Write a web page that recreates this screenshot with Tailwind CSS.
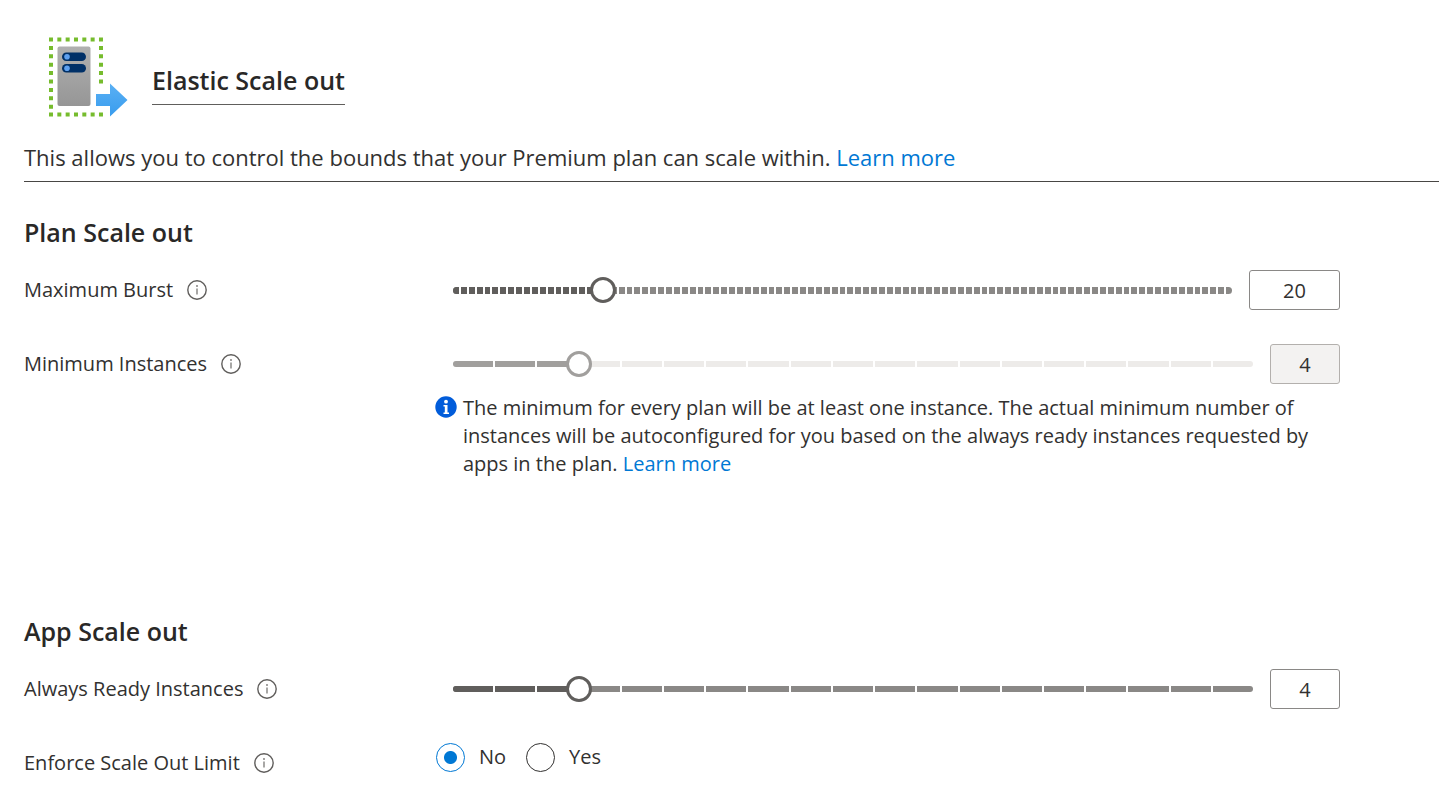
<!DOCTYPE html>
<html lang="en">
<head>
<meta charset="utf-8">
<title>Elastic Scale out</title>
<script src="https://cdn.jsdelivr.net/npm/@tailwindcss/browser@4"></script>
</head>
<body class="bg-white pl-6 text-[20px] leading-7 text-[#323130] font-['Open_Sans','Noto_Sans',sans-serif]">
<svg class="hidden">
  <symbol id="info" viewBox="0 0 20 20"><circle cx="10" cy="10" r="9.2" fill="none" stroke="#605e5c" stroke-width="1.4"/><path d="M10 8.500v6" stroke="#797775" stroke-width="1.300"/><circle cx="10" cy="6" r="0.900" fill="#797775"/></symbol>
</svg>

<header class="flex items-start gap-6 pt-9 pl-6">
  <svg class="h-[82px] w-20 shrink-0" viewBox="0 0 80 82" aria-hidden="true">
    <defs>
      <linearGradient id="box" x1="0" y1="0" x2="0" y2="1"><stop offset="0" stop-color="#b0b0b0"/><stop offset="1" stop-color="#969696"/></linearGradient>
      <linearGradient id="arrow" x1="0" y1="0" x2="0" y2="1"><stop offset="0" stop-color="#5ab0f4"/><stop offset="1" stop-color="#389cee"/></linearGradient>
    </defs>
    <g fill="none" stroke="#76bc2d" stroke-width="4">
      <path d="M1 3.5h56" stroke-dasharray="4 4.33"/>
      <path d="M1 78.5h56" stroke-dasharray="4 4.33"/>
      <path d="M3 9.9v63" stroke-dasharray="4 4.4"/>
      <path d="M53 9.9v39" stroke-dasharray="4 4.4"/>
    </g>
    <rect x="9.5" y="10.5" width="33" height="59.500" rx="2" fill="url(#box)"/>
    <rect x="14" y="16.500" width="24" height="8.500" rx="4.250" fill="#003067"/>
    <rect x="14" y="28" width="24" height="8.500" rx="4.250" fill="#003067"/>
    <circle cx="19" cy="20.700" r="2.800" fill="#5ea0ef"/>
    <circle cx="19" cy="32.300" r="2.800" fill="#5ea0ef"/>
    <path d="M48 58h14V47.500L79.500 64 62 80.500V70H48z" fill="url(#arrow)"/>
  </svg>
  <h1 class="mt-[26px] border-b border-[#605e5c] pb-1.5 text-[25px] leading-9 font-semibold text-[#292827]">Elastic Scale out</h1>
</header>

<p class="mt-[23px] border-b border-[#484644] pb-2 text-[22px] leading-8">This allows you to control the bounds that your Premium plan can scale within. <a href="#" class="text-[#0078d4]">Learn more</a></p>

<main class="pr-[99px]">
  <section>
    <h2 class="pt-8 text-[25px] leading-9 font-semibold text-[#292827]">Plan Scale out</h2>
    <div class="mt-5 flex h-10 items-center">
      <div class="flex w-[429px] shrink-0 items-center gap-3.5"><label for="burst">Maximum Burst</label><svg class="size-5"><use href="#info"/></svg></div>
      <div class="mr-[17px] grid flex-1 items-center">
        <div class="col-start-1 row-start-1 h-[7px] overflow-hidden rounded-full bg-[#8a8886]"><div class="h-full bg-[#605e5c]" style="width:19.19%"></div></div>
        <div class="col-start-1 row-start-1 -mr-0.5 h-[7px] bg-[repeating-linear-gradient(90deg,transparent_0_calc(100%/99_-_2px),white_calc(100%/99_-_2px)_calc(100%/99))]"></div>
        <input id="burst" type="range" min="1" max="100" value="20" class="relative col-start-1 row-start-1 -ml-[13px] h-[26px] w-[calc(100%+26px)] appearance-none bg-transparent [&::-webkit-slider-thumb]:size-[26px] [&::-webkit-slider-thumb]:appearance-none [&::-webkit-slider-thumb]:rounded-full [&::-webkit-slider-thumb]:border-3 [&::-webkit-slider-thumb]:border-[#605e5c] [&::-webkit-slider-thumb]:bg-white">
      </div>
      <input type="text" value="20" aria-label="Maximum Burst value" class="h-10 w-[91px] rounded-[3px] border border-[#8a8886] text-center">
    </div>
    <div class="mt-[34px] flex h-10 items-center">
      <div class="flex w-[429px] shrink-0 items-center gap-3.5"><label for="minimum">Minimum Instances</label><svg class="size-5"><use href="#info"/></svg></div>
      <div class="mr-[17px] grid flex-1 items-center">
        <div class="col-start-1 row-start-1 h-1.5 overflow-hidden rounded-full bg-[#edebe9]"><div class="h-full bg-[#a19f9d]" style="width:15.79%"></div></div>
        <div class="col-start-1 row-start-1 -mr-0.5 h-1.5 bg-[repeating-linear-gradient(90deg,transparent_0_calc(100%/19_-_2px),white_calc(100%/19_-_2px)_calc(100%/19))]"></div>
        <input id="minimum" type="range" min="1" max="20" value="4" disabled class="relative col-start-1 row-start-1 -ml-[13px] h-[26px] w-[calc(100%+26px)] appearance-none bg-transparent [&::-webkit-slider-thumb]:size-[26px] [&::-webkit-slider-thumb]:appearance-none [&::-webkit-slider-thumb]:rounded-full [&::-webkit-slider-thumb]:border-3 [&::-webkit-slider-thumb]:border-[#a19f9d] [&::-webkit-slider-thumb]:bg-white">
      </div>
      <input type="text" value="4" disabled aria-label="Minimum Instances value" class="h-10 w-[70px] rounded-[3px] border border-[#b3b0ad] bg-[#f3f2f1] text-center">
    </div>
    <div class="mt-2.5 ml-[411px] flex gap-1.5">
      <svg class="mt-0.5 size-[22px] shrink-0" viewBox="0 0 22 22" aria-hidden="true"><circle cx="11" cy="11" r="10.700" fill="#015cda"/><circle cx="11" cy="5.700" r="1.900" fill="#fff"/><path d="M8.500 9h4v7.500h1.500V18H8.500v-1.500h1.300v-6H8.500z" fill="#fff"/></svg>
      <p class="max-w-[870px]">The minimum for every plan will be at least one instance. The actual minimum number of instances will be autoconfigured for you based on the always ready instances requested by apps in the plan. <a href="#" class="text-[#0078d4]">Learn more</a></p>
    </div>
  </section>

  <section class="mt-[103px]">
    <h2 class="pt-8 text-[25px] leading-9 font-semibold text-[#292827]">App Scale out</h2>
    <div class="mt-5 flex h-10 items-center">
      <div class="flex w-[429px] shrink-0 items-center gap-3.5"><label for="ready">Always Ready Instances</label><svg class="size-5"><use href="#info"/></svg></div>
      <div class="mr-[17px] grid flex-1 items-center">
        <div class="col-start-1 row-start-1 h-1.5 overflow-hidden rounded-full bg-[#8a8886]"><div class="h-full bg-[#605e5c]" style="width:15.79%"></div></div>
        <div class="col-start-1 row-start-1 -mr-0.5 h-1.5 bg-[repeating-linear-gradient(90deg,transparent_0_calc(100%/19_-_2px),white_calc(100%/19_-_2px)_calc(100%/19))]"></div>
        <input id="ready" type="range" min="1" max="20" value="4" class="relative col-start-1 row-start-1 -ml-[13px] h-[26px] w-[calc(100%+26px)] appearance-none bg-transparent [&::-webkit-slider-thumb]:size-[26px] [&::-webkit-slider-thumb]:appearance-none [&::-webkit-slider-thumb]:rounded-full [&::-webkit-slider-thumb]:border-3 [&::-webkit-slider-thumb]:border-[#605e5c] [&::-webkit-slider-thumb]:bg-white">
      </div>
      <input type="text" value="4" aria-label="Always Ready Instances value" class="h-10 w-[70px] rounded-[3px] border border-[#8a8886] text-center">
    </div>
    <div role="radiogroup" aria-labelledby="limit-label" class="mt-7 flex h-10 items-center">
      <div class="flex w-[412px] shrink-0 items-center gap-3.5 pt-3"><span id="limit-label">Enforce Scale Out Limit</span><svg class="size-5"><use href="#info"/></svg></div>
      <div class="flex items-center gap-5">
        <label class="flex items-center gap-3.5"><input type="radio" name="limit" checked class="size-[29px] appearance-none rounded-full border border-[#323130] checked:border-[#0078d4] checked:bg-[radial-gradient(circle,#0078d4_6px,transparent_7px)]">No</label>
        <label class="flex items-center gap-3.5"><input type="radio" name="limit" class="size-[29px] appearance-none rounded-full border border-[#323130] checked:border-[#0078d4] checked:bg-[radial-gradient(circle,#0078d4_6px,transparent_7px)]">Yes</label>
      </div>
    </div>
  </section>
</main>
</body>
</html>
